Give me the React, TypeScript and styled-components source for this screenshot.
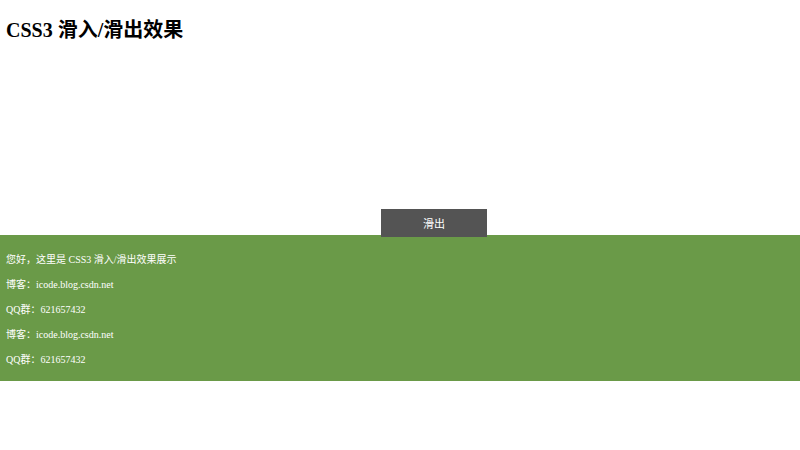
import styled, { createGlobalStyle } from 'styled-components';

const GlobalStyle = createGlobalStyle`
  html, body {
    margin: 0;
    padding: 0;
    background: #ffffff;
    font-family: 'Liberation Serif', 'Noto Sans CJK SC', serif;
  }
`;

const Title = styled.h2`
  margin: 18px 0 0;
  padding: 0 6px;
  font-size: 20px;
  line-height: 24px;
  font-weight: bold;
  color: #000000;
`;

const Stage = styled.div`
  height: 339px;
  display: flex;
  flex-direction: column;
  justify-content: flex-end;
`;

const SlideButton = styled.button`
  position: relative;
  z-index: 1;
  align-self: flex-start;
  width: 106px;
  height: 28px;
  margin: 0 0 -2px 381px;
  padding: 0;
  border: none;
  background: #545454;
  color: #ffffff;
  font-family: 'Liberation Serif', 'Noto Sans CJK SC', serif;
  font-size: 11px;
  cursor: pointer;
`;

const Panel = styled.div`
  background: #6a9a48;
  color: #ffffff;
  padding: 11.5px 6px 9.5px;
  font-size: 10px;
`;

const Line = styled.p`
  margin: 0;
  line-height: 25px;
`;

const lines = [
  '您好，这里是 CSS3 滑入/滑出效果展示',
  '博客：icode.blog.csdn.net',
  'QQ群：621657432',
  '博客：icode.blog.csdn.net',
  'QQ群：621657432',
];

export default function App() {
  return (
    <>
      <GlobalStyle />
      <Title>CSS3 滑入/滑出效果</Title>
      <Stage>
        <SlideButton>滑出</SlideButton>
        <Panel>
          {lines.map((text, i) => (
            <Line key={i}>{text}</Line>
          ))}
        </Panel>
      </Stage>
    </>
  );
}
